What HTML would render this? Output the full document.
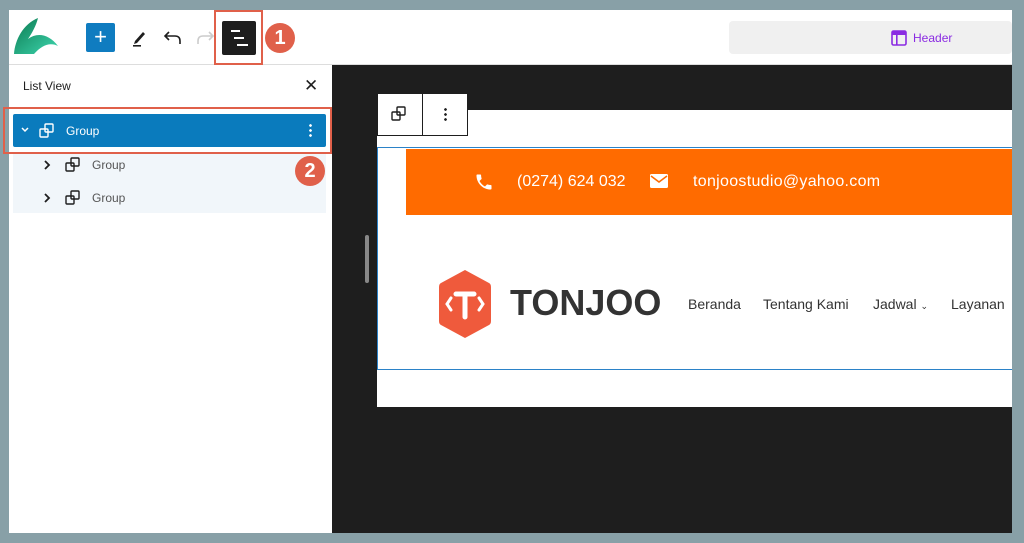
<!DOCTYPE html>
<html><head><style>
*{margin:0;padding:0;box-sizing:border-box}
body{width:1024px;height:543px;background:#88a0a7;position:relative;overflow:hidden;font-family:"Liberation Sans",sans-serif}
.a{position:absolute}
</style></head><body>
<div class="a" style="left:9px;top:10px;width:1003px;height:523px;background:#fff"></div>
<!-- toolbar -->
<div class="a" style="left:9px;top:64px;width:1003px;height:1px;background:#ddd"></div>
<svg class="a" style="left:13px;top:16px" width="46" height="40" viewBox="0 0 46 40"><defs><linearGradient id="g" x1="0" y1="0" x2="1" y2="1"><stop offset="0" stop-color="#0b7a50"/><stop offset="1" stop-color="#3fd7b0"/></linearGradient></defs><path d="M1 38 C2 24 10 8 25 2 C23 10 19 17 15 23 C24 16 36 18 45 30 C37 26 29 29 21 38 Z" fill="url(#g)"/></svg>
<div class="a" style="left:86px;top:23px;width:29px;height:29px;background:#0f7cc0;border-radius:2px;color:#fff;font-size:22px;line-height:28px;text-align:center">+</div>
<svg class="a" style="left:130px;top:28px" width="18" height="20" viewBox="0 0 18 20"><path d="M5 13 L13 4 L15 6 L7 15 L4 16Z" fill="#1e1e1e"/><rect x="3" y="17" width="8" height="1.6" fill="#1e1e1e"/></svg>
<svg class="a" style="left:163px;top:29px" width="20" height="18" viewBox="0 0 20 18"><path d="M6 3 L2 7 L6 11 M2 7 H12 Q17 7 17 12 V15" fill="none" stroke="#1e1e1e" stroke-width="1.6"/></svg>
<svg class="a" style="left:195px;top:29px" width="20" height="18" viewBox="0 0 20 18"><path d="M14 3 L18 7 L14 11 M18 7 H8 Q3 7 3 12 V15" fill="none" stroke="#ccc" stroke-width="1.6"/></svg>
<div class="a" style="left:214px;top:10px;width:49px;height:55px;border:2px solid #e0604a"></div>
<div class="a" style="left:222px;top:21px;width:34px;height:34px;background:#1e1e1e;border-radius:2px"></div>
<div class="a" style="left:231px;top:30px;width:9px;height:2px;background:#fff"></div>
<div class="a" style="left:234px;top:37px;width:10px;height:2px;background:#fff"></div>
<div class="a" style="left:237px;top:44px;width:11px;height:2px;background:#fff"></div>
<div class="a" style="left:265px;top:23px;width:30px;height:30px;border-radius:50%;background:#e0604a;color:#fff;font-weight:bold;font-size:20px;line-height:30px;text-align:center">1</div>
<div class="a" style="left:729px;top:21px;width:283px;height:33px;background:#f0f0f0;border-radius:4px"></div>
<svg class="a" style="left:891px;top:30px" width="16" height="16" viewBox="0 0 16 16"><rect x="1" y="1" width="14" height="14" rx="1.5" fill="none" stroke="#8a2be2" stroke-width="1.6"/><rect x="1" y="1" width="14" height="4" fill="#8a2be2"/><rect x="5" y="5" width="1.6" height="10" fill="#8a2be2"/></svg>
<div class="a" style="left:913px;top:31px;font-size:12px;color:#8a2be2">Header</div>
<!-- sidebar -->
<div class="a" style="left:23px;top:79px;font-size:12px;color:#1e1e1e">List View</div>
<div class="a" style="left:304px;top:76px;font-size:17px;color:#1e1e1e">✕</div>
<div class="a" style="left:13px;top:153px;width:313px;height:60px;background:#f1f6fa"></div>
<div class="a" style="left:13px;top:114px;width:313px;height:33px;background:#0a7bbd;border-radius:2px"></div>
<div class="a" style="left:3px;top:107px;width:329px;height:47px;border:2px solid #e0604a"></div>
<svg class="a" style="left:21px;top:126px" width="8" height="8" viewBox="0 0 8 8"><path d="M1 2 L4 5 L7 2" fill="none" stroke="#fff" stroke-width="1.5"/></svg>
<svg class="a" style="left:39px;top:123px" width="16" height="16" viewBox="0 0 16 16"><rect x="1" y="6" width="8" height="8" rx="1" fill="none" stroke="#fff" stroke-width="1.4"/><rect x="6" y="1" width="8" height="8" rx="1" fill="none" stroke="#fff" stroke-width="1.4"/></svg>
<div class="a" style="left:66px;top:124px;font-size:12px;color:#fff">Group</div>
<div class="a" style="left:309px;top:123px;width:3px;height:14px;background:radial-gradient(circle,#fff 1.2px,transparent 1.5px) 0 0/3px 5px"></div>
<div class="a" style="left:295px;top:156px;width:30px;height:30px;border-radius:50%;background:#e0604a;color:#fff;font-weight:bold;font-size:20px;line-height:30px;text-align:center">2</div>
<svg class="a" style="left:43px;top:160px" width="8" height="10" viewBox="0 0 8 10"><path d="M2 1 L6 5 L2 9" fill="none" stroke="#1e1e1e" stroke-width="1.8"/></svg>
<svg class="a" style="left:65px;top:157px" width="16" height="16" viewBox="0 0 16 16"><rect x="1" y="6" width="8" height="8" rx="1" fill="none" stroke="#1e1e1e" stroke-width="1.4"/><rect x="6" y="1" width="8" height="8" rx="1" fill="none" stroke="#1e1e1e" stroke-width="1.4"/></svg>
<div class="a" style="left:92px;top:158px;font-size:12px;color:#555">Group</div>
<svg class="a" style="left:43px;top:193px" width="8" height="10" viewBox="0 0 8 10"><path d="M2 1 L6 5 L2 9" fill="none" stroke="#1e1e1e" stroke-width="1.8"/></svg>
<svg class="a" style="left:65px;top:190px" width="16" height="16" viewBox="0 0 16 16"><rect x="1" y="6" width="8" height="8" rx="1" fill="none" stroke="#1e1e1e" stroke-width="1.4"/><rect x="6" y="1" width="8" height="8" rx="1" fill="none" stroke="#1e1e1e" stroke-width="1.4"/></svg>
<div class="a" style="left:92px;top:191px;font-size:12px;color:#555">Group</div>
<!-- canvas -->
<div class="a" style="left:332px;top:65px;width:680px;height:468px;background:#1e1e1e"></div>
<div class="a" style="left:365px;top:235px;width:4px;height:48px;background:#888;border-radius:2px"></div>
<div class="a" style="left:377px;top:110px;width:635px;height:297px;background:#fff"></div>
<div class="a" style="left:377px;top:93px;width:91px;height:43px;background:#fff;border:1px solid #1e1e1e"></div>
<div class="a" style="left:422px;top:93px;width:1px;height:43px;background:#1e1e1e"></div>
<svg class="a" style="left:391px;top:106px" width="16" height="16" viewBox="0 0 16 16"><rect x="1" y="6" width="8" height="8" rx="1" fill="none" stroke="#1e1e1e" stroke-width="1.4"/><rect x="6" y="1" width="8" height="8" rx="1" fill="none" stroke="#1e1e1e" stroke-width="1.4"/></svg>
<div class="a" style="left:444px;top:107px;width:3px;height:14px;background:radial-gradient(circle,#1e1e1e 1.2px,transparent 1.5px) 0 0/3px 5px"></div>
<div class="a" style="left:377px;top:147px;width:635px;height:223px;border:1.5px solid #2b82c8;border-right:none"></div>
<div class="a" style="left:406px;top:149px;width:606px;height:66px;background:#ff6b00"></div>
<svg class="a" style="left:474px;top:172px" width="20" height="20" viewBox="0 0 24 24"><path d="M6.6 10.8c1.4 2.8 3.8 5.1 6.6 6.6l2.2-2.2c.3-.3.7-.4 1-.2 1.1.4 2.3.6 3.6.6.6 0 1 .4 1 1V20c0 .6-.4 1-1 1C10.6 21 3 13.4 3 4c0-.6.4-1 1-1h3.5c.6 0 1 .4 1 1 0 1.3.2 2.5.6 3.6.1.3 0 .7-.2 1z" fill="#fff"/></svg>
<div class="a" style="left:517px;top:173px;font-size:16px;color:#fff">(0274) 624 032</div>
<svg class="a" style="left:649px;top:173px" width="20" height="16" viewBox="0 0 20 16"><rect x="1" y="1" width="18" height="14" rx="1.5" fill="#fff"/><path d="M2 3 L10 9 L18 3" fill="none" stroke="#ff6b00" stroke-width="1.6"/></svg>
<div class="a" style="left:693px;top:173px;font-size:16px;color:#fff;letter-spacing:0.3px">tonjoostudio@yahoo.com</div>
<svg class="a" style="left:439px;top:269px" width="52" height="70" viewBox="0 0 52 70"><path d="M26 1 L50 14 Q52 15 52 18 V52 Q52 55 50 56 L26 69 L2 56 Q0 55 0 52 V18 Q0 15 2 14 Z" fill="#ef5a3c"/><path d="M12 29 L8 35 L12 41 M40 29 L44 35 L40 41" fill="none" stroke="#fff" stroke-width="3" stroke-linecap="round"/><path d="M17 25 H35 M26 25 V48" fill="none" stroke="#fff" stroke-width="5" stroke-linecap="round"/></svg>
<div class="a" style="left:510px;top:282px;font-size:36px;font-weight:bold;color:#333">TONJOO</div>
<div class="a" style="left:688px;top:296px;font-size:14px;color:#333">Beranda</div>
<div class="a" style="left:763px;top:296px;font-size:14px;color:#333">Tentang Kami</div>
<div class="a" style="left:873px;top:296px;font-size:14px;color:#333">Jadwal <span style="font-size:9px">⌄</span></div>
<div class="a" style="left:951px;top:296px;font-size:14px;color:#333">Layanan</div>
</body></html>
